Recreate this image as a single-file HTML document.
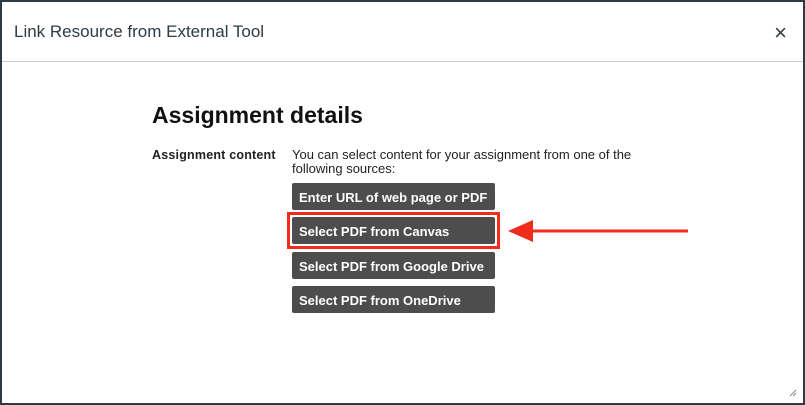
<!DOCTYPE html>
<html><head><style>
body{margin:0;width:805px;height:405px;background:#2d3b45;overflow:hidden;font-family:"Liberation Sans",sans-serif}
.m{position:absolute;left:2px;top:2px;width:801px;height:401px;background:#fff}
.h{height:59px;border-bottom:1px solid #c7cdd1;position:relative}
.h span{position:absolute;left:12px;top:20px;font-size:17px;color:#2d3b45}
.x{position:absolute;right:16px;top:18px;font-size:22px;color:#2d3b45}
h1{position:absolute;left:150px;top:100px;margin:0;font-size:23px;font-weight:bold;color:#111}
.l{position:absolute;left:150px;top:146px;font-size:12.5px;font-weight:bold;color:#222;letter-spacing:0.2px}
.d{position:absolute;left:290px;top:146px;font-size:13px;color:#222;line-height:14px;width:380px}
.b{position:absolute;left:290px;width:203px;height:27px;background:#4d4d4d;color:#fff;font-size:13px;font-weight:bold;line-height:29px;padding-left:7px;box-sizing:border-box;border-radius:2px;overflow:hidden;white-space:nowrap}
.r{position:absolute;left:285px;top:210px;width:213px;height:37px;border:3px solid #f22c1d;box-sizing:border-box}
</style></head><body><div class="m">
<div class="h"><span>Link Resource from External Tool</span><div class="x">×</div></div>
<h1>Assignment details</h1>
<div class="l">Assignment content</div>
<div class="d">You can select content for your assignment from one of the following sources:</div>
<div class="b" style="top:181px">Enter URL of web page or PDF</div>
<div class="b" style="top:215px">Select PDF from Canvas</div>
<div class="r"></div>
<div class="b" style="top:250px">Select PDF from Google Drive</div>
<div class="b" style="top:284px">Select PDF from OneDrive</div>
<svg style="position:absolute;left:0;top:0" width="801" height="401"><line x1="525" y1="229" x2="686" y2="229" stroke="#f22c1d" stroke-width="3"/><polygon points="506,229 531,218 531,240" fill="#f22c1d"/>
<path d="M788 394 L794 388 M791 394 L794 391" stroke="#888" stroke-width="1"/></svg>
</div></body></html>
